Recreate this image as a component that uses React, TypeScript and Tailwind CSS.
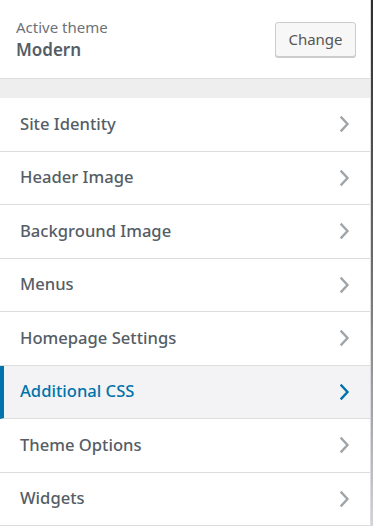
const sections = [
  { title: "Site Identity" },
  { title: "Header Image" },
  { title: "Background Image" },
  { title: "Menus" },
  { title: "Homepage Settings" },
  { title: "Additional CSS", active: true },
  { title: "Theme Options" },
  { title: "Widgets" },
];

function Chevron({ active }: { active?: boolean }) {
  return (
    <svg width="12" height="18" viewBox="0 0 12 18" fill="none">
      <path
        d="M2.5 2.5 L8.5 9 L2.5 15.5"
        stroke={active ? "#0073aa" : "#a0a5aa"}
        strokeWidth="2.4"
        strokeLinecap="square"
        strokeLinejoin="miter"
      />
    </svg>
  );
}

export default function App() {
  return (
    <div className="w-[373px] h-[526px] overflow-hidden bg-white flex font-['Noto_Sans',sans-serif]">
      <div className="flex-1 flex flex-col border-r border-[#dcdcde]">
        {/* Active theme header */}
        <div className="h-[79px] flex items-start justify-between pl-4 pr-[14px] pt-[17px] border-b border-[#dddddd]">
          <div className="flex flex-col">
            <span className="text-[15px] leading-[20px] text-[#6c7278]">Active theme</span>
            <span className="text-[17px] leading-[26px] font-semibold text-[#555d66]">Modern</span>
          </div>
          <button className="mt-[5px] w-[81px] h-[35px] rounded-[3px] border border-[#cccccc] bg-[#f7f7f7] shadow-[0_1px_0_#cccccc] text-[15px] text-[#555555]">
            Change
          </button>
        </div>

        <div className="h-[19px] bg-[#eeeeee]" />

        {/* Sections */}
        <ul className="flex flex-col">
          {sections.map(s => (
            <li
              key={s.title}
              className={
                s.active
                  ? "h-[53.5px] flex items-center justify-between pl-4 pr-[19px] border-b border-[#dddddd] border-l-4 border-l-[#0073aa] bg-[#f3f3f5]"
                  : "h-[53.5px] flex items-center justify-between pl-5 pr-[19px] border-b border-[#dddddd]"
              }
            >
              <span
                className={
                  s.active
                    ? "text-[16.6px] font-medium text-[#0073aa]"
                    : "text-[16.6px] font-medium text-[#555d66]"
                }
              >
                {s.title}
              </span>
              <Chevron active={s.active} />
            </li>
          ))}
        </ul>
      </div>
      <div className="w-[2px] bg-gradient-to-b from-[#2e2e2e] via-[#6b6b6b] to-[#d0d5da]" />
    </div>
  );
}
